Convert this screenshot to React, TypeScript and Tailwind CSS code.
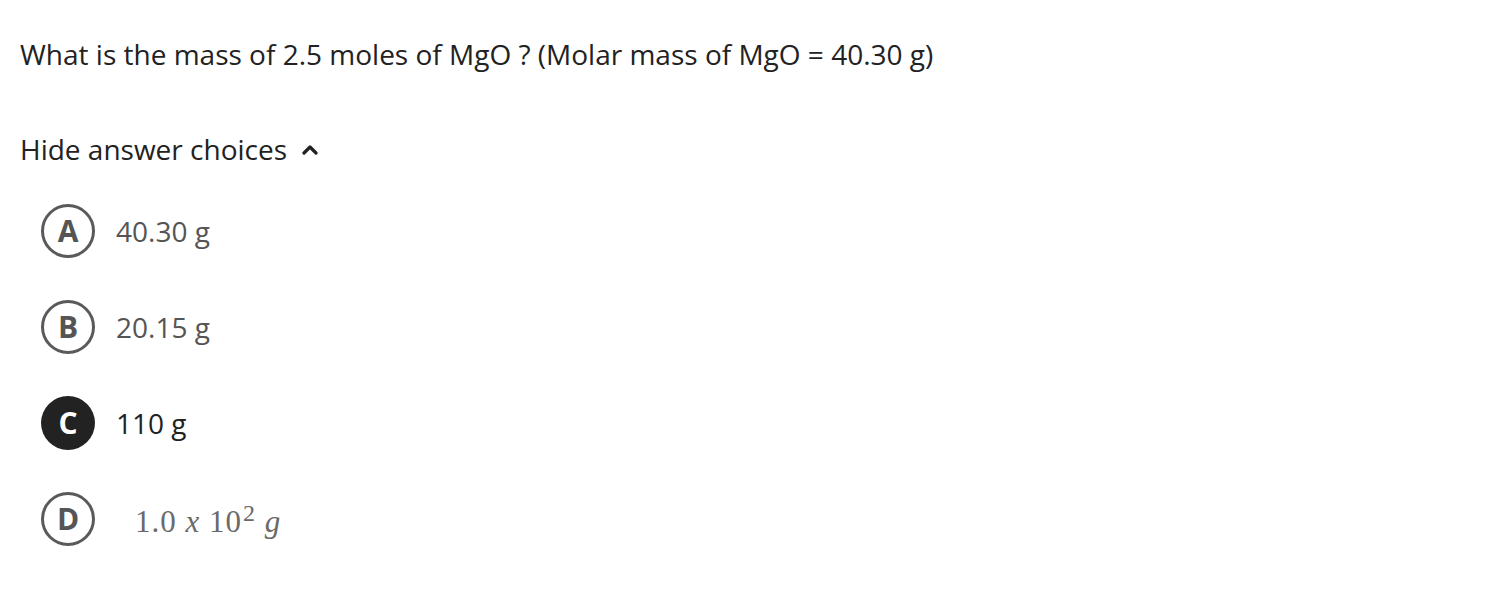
import React from "react";

type Choice = { letter: string; text: React.ReactNode; selected?: boolean; serif?: boolean };

const CHOICES: Choice[] = [
  { letter: "A", text: "40.30 g" },
  { letter: "B", text: "20.15 g" },
  { letter: "C", text: "110 g", selected: true },
  {
    letter: "D",
    serif: true,
    text: (
      <>
        1.0 <i>x</i> 10<sup className="relative -top-[11px] ml-[1px] text-[24px]">2</sup> <i>g</i>
      </>
    ),
  },
];

const ChoiceRow = ({ choice }: { choice: Choice }) => (
  <div className="flex h-[96px] items-center">
    <div
      className={
        choice.selected
          ? "flex h-[54px] w-[54px] items-center justify-center rounded-full bg-[#222222] text-[30px] font-bold leading-none text-white"
          : "flex h-[54px] w-[54px] items-center justify-center rounded-full border-[3px] border-[#5a5a5a] text-[30px] font-bold leading-none text-[#555555]"
      }
    >
      {choice.letter}
    </div>
    {choice.serif ? (
      <div
        className="ml-[40px] mt-[6px] text-[31px] tracking-[1px] text-[#6a6a6a]"
        style={{ fontFamily: '"Liberation Serif", serif' }}
      >
        {choice.text}
      </div>
    ) : (
      <div className={choice.selected ? "ml-[21px] text-[28px] text-[#222222]" : "ml-[21px] text-[28px] text-[#555555]"}>
        {choice.text}
      </div>
    )}
  </div>
);

export default function App() {
  return (
    <div
      className="min-h-screen bg-white px-[20px] pt-[32px] text-[#222222]"
      style={{ fontFamily: '"Open Sans", sans-serif' }}
    >
      <p className="text-[28px] leading-[44px]">
        What is the mass of 2.5 moles of MgO ? (Molar mass of MgO = 40.30 g)
      </p>

      <button className="mt-[53px] flex items-center text-[28px] leading-[40px] text-[#222222]">
        Hide answer choices
        <svg className="ml-[15px] mt-[2px]" width="16" height="12" viewBox="0 0 16 12">
          <path d="M2 9 L8 3 L14 9" fill="none" stroke="#222222" strokeWidth="3.2" strokeLinecap="round" strokeLinejoin="round" />
        </svg>
      </button>

      <div className="mt-[14px] pl-[21px]">
        {CHOICES.map((c) => (
          <ChoiceRow key={c.letter} choice={c} />
        ))}
      </div>
    </div>
  );
}
